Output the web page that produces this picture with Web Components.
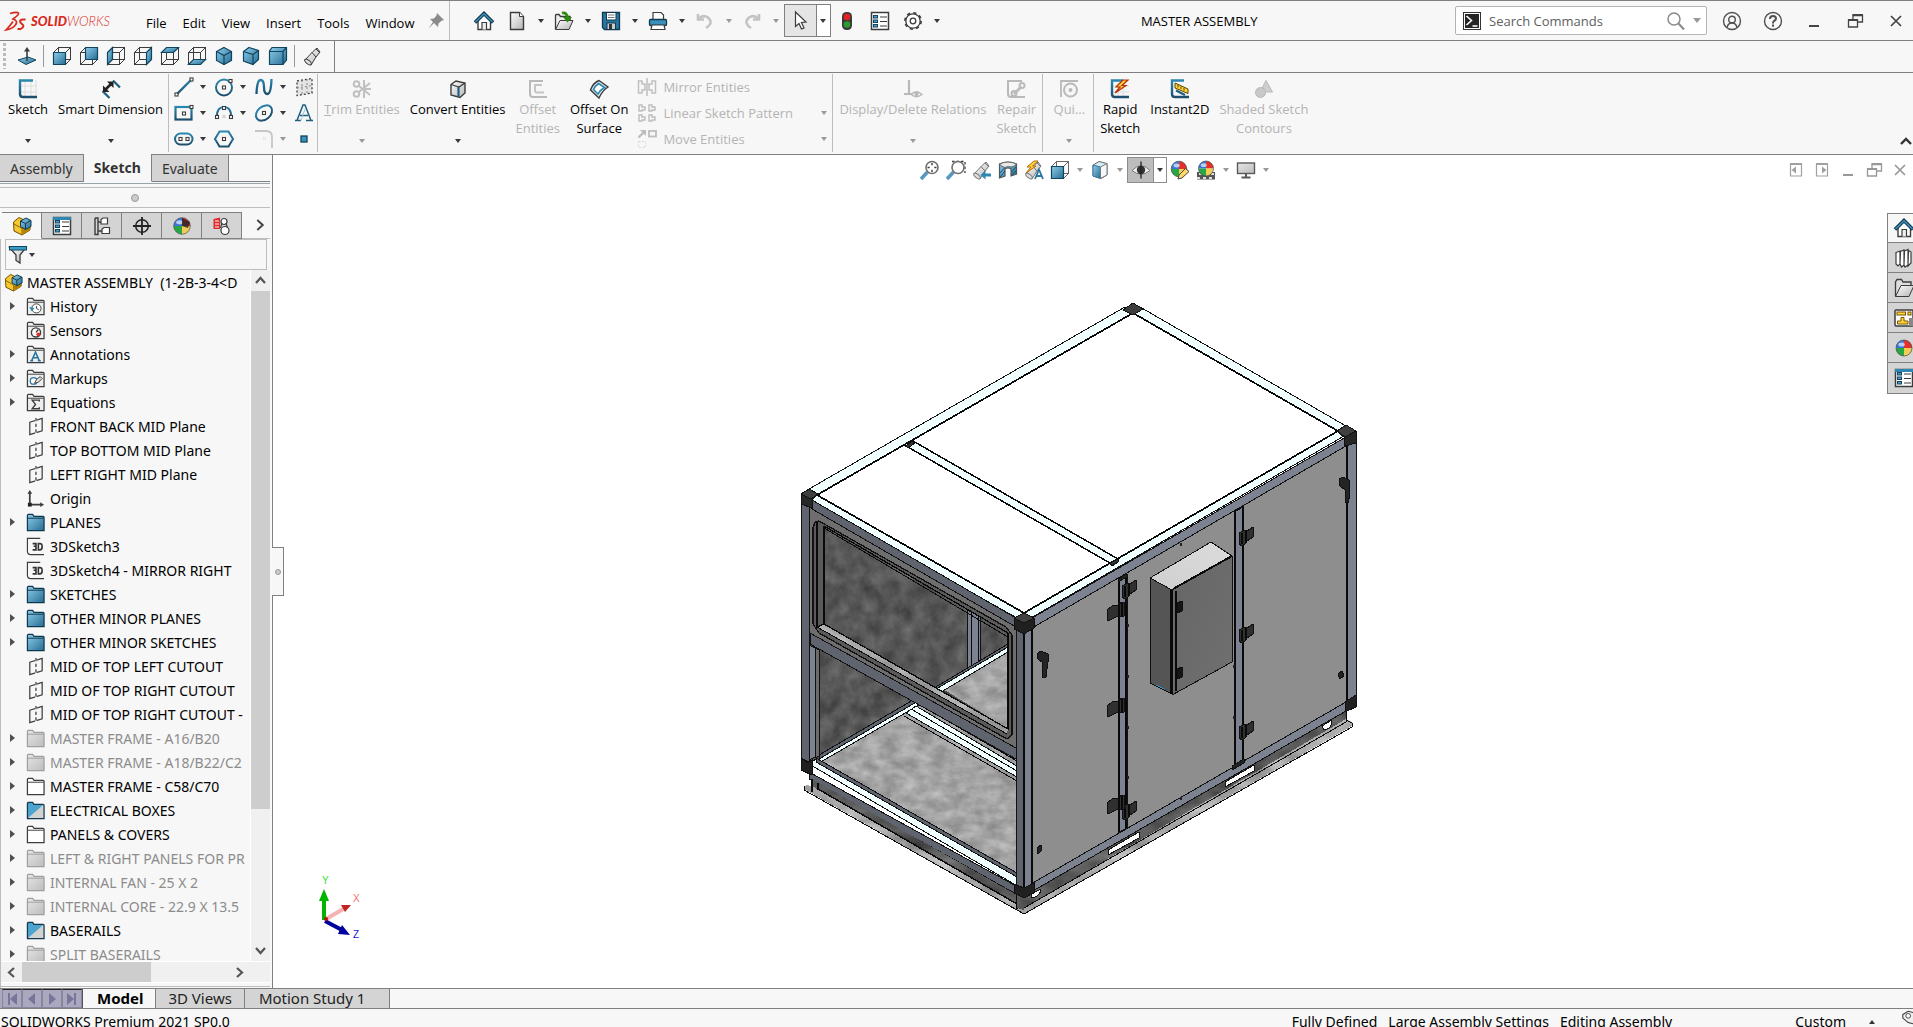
<!DOCTYPE html>
<html lang="en">
<head>
<meta charset="utf-8">
<title>MASTER ASSEMBLY</title>
<style>
html,body{margin:0;height:100%}
body{display:flex;flex-direction:column;height:100vh;overflow:hidden;background:#f7f7f7;color:#000;
font-family:"Noto Sans","Open Sans",sans-serif;font-size:14px;--line:#808080;--soft:#bdbdbd;--bar:#f7f7f7;--tab:#d4d4d4;--ui:"Open Sans","Noto Sans",sans-serif}
cad-workspace{flex:1;min-height:0}
</style>
</head>
<body>
<cad-titlebar heading="MASTER ASSEMBLY"></cad-titlebar>
<cad-viewbar></cad-viewbar>
<cad-ribbon></cad-ribbon>
<cad-workspace>
  <cad-feature-panel slot="side"></cad-feature-panel>
  <cad-viewport></cad-viewport>
</cad-workspace>
<cad-sheet-tabs></cad-sheet-tabs>
<cad-statusbar>
  <span>SOLIDWORKS Premium 2021 SP0.0</span>
  <span slot="state">Fully Defined</span>
  <span slot="state">Large Assembly Settings</span>
  <span slot="state">Editing Assembly</span>
</cad-statusbar>

<script>
const K='#3c3c3c', B='#1f5f80', G='#b9b9b9';
const DEFS=`<defs><linearGradient id="b" x2="1" y2="1"><stop stop-color="#8fcdec"/><stop offset="1" stop-color="#256d92"/></linearGradient>
<linearGradient id="g" x2="1" y2="1"><stop stop-color="#fff"/><stop offset="1" stop-color="#b5b5b5"/></linearGradient>
<linearGradient id="lg" x2="1" y2="1"><stop stop-color="#e6e6e6"/><stop offset="1" stop-color="#bcbcbc"/></linearGradient>
<linearGradient id="s" x2="0" y2="1"><stop stop-color="#2b86b0"/><stop offset="1" stop-color="#1d4f6c"/></linearGradient></defs>`;
const wire=(f,k=K)=>`<g fill="none" stroke="${k}" stroke-width="1"><rect x="1.5" y="6.5" width="12" height="12"/><rect x="6.5" y="1.5" width="12" height="12"/><path d="M1.500 6.500 6.500 1.500M13.500 6.500 18.500 1.500M1.500 18.500 6.500 13.500M13.500 18.500 18.500 13.500"/></g><path d="${f}" fill="url(#b)" stroke="#10455f" stroke-width="1.2"/>`;
const folder=(fill,st,inner='')=>`<path d="M1.500 18.500V2.500q0-1 1-1H7l1.500 2H18q1 0 1 1v14z" fill="${fill}" stroke="${st}" stroke-width="1.300"/><path d="M2 5.500H18.500" stroke="${st}" fill="none"/>${inner}`;
const node=(x,y,c=K)=>`<rect x="${x-1.5}" y="${y-1.500}" width="3" height="3" fill="#fff" stroke="${c}" stroke-width="1.100"/>`;
const ball=(x,y,r)=>`<path d="M${x} ${y}V${y-r}A${r} ${r} 0 0 0 ${x-r} ${y}z" fill="#3b76d8"/><path d="M${x} ${y}V${y-r}A${r} ${r} 0 0 1 ${x+r} ${y}z" fill="#e3302b"/><path d="M${x} ${y}H${x-r}A${r} ${r} 0 0 0 ${x} ${y+r}z" fill="#27a643"/><path d="M${x} ${y}H${x+r}A${r} ${r} 0 0 1 ${x} ${y+r}z" fill="#f0cd55"/><circle cx="${x}" cy="${y}" r="${r}" fill="none" stroke="#4a4a4a" stroke-width=".7"/><ellipse cx="${x-r*.3}" cy="${y-r*.45}" rx="${r*.4}" ry="${r*.25}" fill="#fff" opacity=".65"/>`;
const spy=(c=K)=>`<path d="M2 14 8 19 13 11 17 6 14 2 9.500 6z" fill="url(#g)" stroke="${c}"/><path d="M9 6.500 13 11M13 3 17 7" stroke="${c}" fill="none"/><ellipse cx="5" cy="16" rx="4" ry="1.900" transform="rotate(40 5 16)" fill="#ddd" stroke="${c}"/>`;
const list=`<rect x="1.500" y="1.500" width="17" height="17" fill="#fff" stroke="${K}" stroke-width="1.500"/><g fill="#4c9cc8" stroke="#10455f"><rect x="3.500" y="4.500" width="4" height="2.500"/><rect x="3.500" y="9" width="4" height="2.500"/><rect x="3.500" y="13.500" width="4" height="2.500"/></g><path d="M10 6h7M10 10.500h7M10 15h7" stroke="${K}" stroke-width="1.200"/>`;
const home=`<path d="M4 9v9.500H16.500V9" fill="#fff" stroke="${K}" stroke-width="1.400"/><path d="M8 18.500V11.500h4.500v7" fill="#eee" stroke="${K}" stroke-width="1.200"/><path d="M1 11.500 10 2.500 19 11.500" fill="none" stroke="#10384e" stroke-width="3.600"/><path d="M1.500 11 10 2.700 18.500 11" fill="none" stroke="#3d8fb8" stroke-width="1.500"/>`;
const part=`<path d="M1.500 6 7 1.500 12 4V8l6 1.500V14l-8 5-8-4z" fill="#f5c730" stroke="#6b4d00"/><path d="M2 8 10 12.500 18 9M10 12.500V19" fill="none" stroke="#8b6500"/><path d="M10 14 18 9.500V14l-8 5z" fill="#b88400"/><path d="M8.500 5 14 2l5 2.500v6l-5.500 3-5-3z" fill="url(#b)" stroke="#10384e"/><path d="M8.500 5 13.500 7.500 19 4.500M13.500 7.500V13" fill="none" stroke="#10384e"/>`;
const mag=`<path d="M1 19 7.500 12" stroke="#5599bf" stroke-width="3.600"/><circle cx="12" cy="7.500" r="6" fill="#fff" stroke="#707070" stroke-width="1.600"/>`;
const bolt=`<path d="M13 1 6 8h4L5 14 16 6.500h-4L18 1z" fill="#ffd23b" stroke="#b5300b" stroke-width="1.200"/>`;
const ICONS={
pin:`<path d="M11 2 18 9 15.500 9.800 12.500 12.500 12 16 8 12 2.500 17.500 7 11 4 8 8 7.500 10.500 4.500z" fill="#8a8a8a"/>`,
home,
file:`<path d="M3.500 1.500h9l4 4v13h-13z" fill="url(#g)" stroke="${K}" stroke-width="1.400"/><path d="M12.500 1.500v4h4" fill="#fff" stroke="${K}"/>`,
open:`<path d="M1.500 18.500V4.500q0-1 1-1H5l1.500 2H16v4" fill="#eee" stroke="${K}" stroke-width="1.300"/><path d="M1.500 18.500 6 9.500H19L15 18.500z" fill="url(#g)" stroke="${K}"/><path d="M8 2Q13 1 13.500 7" fill="none" stroke="#2c8b0c" stroke-width="2.800"/><path d="M9 6h9l-4.500 5.500z" fill="#2c8b0c"/>`,
save:`<path d="M1.500 1.500H18.500V18.500H3.500L1.500 16.500z" fill="#2676a0" stroke="#0f3a52" stroke-width="1.300"/><rect x="5.500" y="1.500" width="9.500" height="7.500" fill="#fff" stroke="#0f3a52"/><path d="M7 4h6.500M7 6.500h6.500" stroke="#777"/><rect x="6" y="12" width="8.500" height="6.500" fill="#ccc" stroke="#0f3a52"/><rect x="8" y="13" width="3" height="5" fill="#333"/>`,
print:`<path d="M5 9.500V1.500h8l2.500 2.500v5.500z" fill="#fff" stroke="${K}" stroke-width="1.200"/><rect x="1.500" y="8.500" width="17" height="6" rx="1" fill="#3a90bb" stroke="#0f3a52" stroke-width="1.300"/><path d="M4 14h12l1 4.500H3z" fill="#fff" stroke="${K}" stroke-width="1.200"/>`,
undo:`<path d="M3 3v5.500H9M3.500 8Q8 3 13 6.500Q19 12 11 17" fill="none" stroke="#c4c4c4" stroke-width="2.600"/>`,
redo:`<path d="M17 3v5.500H11M16.500 8Q12 3 7 6.500Q1 12 9 17" fill="none" stroke="#c4c4c4" stroke-width="2.600"/>`,
cursor:`<path d="M5.500 1V15.500L9 12.500 11.500 18 14 17 11.500 11.500 16 11z" fill="#fff" stroke="${K}" stroke-width="1.200"/>`,
lights:`<rect x="5" y="1" width="10" height="18" rx="4.500" fill="#3b3b3b"/><circle cx="10" cy="6" r="3.300" fill="#e32222"/><circle cx="10" cy="13.500" r="3.300" fill="#2f9a2f"/>`,
list,
gear:`<circle cx="10" cy="10" r="7.200" fill="#fff" stroke="${K}" stroke-width="1.300"/><circle cx="10" cy="10" r="8.200" fill="none" stroke="${K}" stroke-width="1.600" stroke-dasharray="3.200 3.240"/><circle cx="10" cy="10" r="2.800" fill="#fff" stroke="${K}" stroke-width="1.300"/>`,
term:`<rect x="1" y="1" width="18" height="18" fill="#333"/><rect x="2.500" y="2.500" width="15" height="15" fill="#262626" stroke="#fff"/><path d="M4.500 5 9.500 9.500 4.500 14" fill="none" stroke="#fff" stroke-width="1.600"/><path d="M10.500 15h5" stroke="#fff" stroke-width="1.600"/>`,
search:`<circle cx="8" cy="8" r="6" fill="none" stroke="#8a8a8a" stroke-width="1.500"/><path d="M12.500 12.500 18 18.500" stroke="#8a8a8a" stroke-width="2"/>`,
user:`<g fill="none" stroke="#505050" stroke-width="1.400"><circle cx="10" cy="10" r="8.500"/><circle cx="10" cy="8.500" r="3.300"/><path d="M5 16.500Q6 12 10 12T15 16.500"/></g>`,
help:`<circle cx="10" cy="10" r="8.500" fill="none" stroke="#505050" stroke-width="1.400"/><path d="M7 8Q7 5 10 5T13 7.500Q13 9 11 10Q10 10.700 10 12.500" fill="none" stroke="#505050" stroke-width="2"/><rect x="9" y="13.500" width="2" height="2.200" fill="#505050"/>`,
min:`<path d="M5 15h10" stroke="#454545" stroke-width="2"/>`,
restore:`<path d="M8 8V4.500h9.500V11H13" fill="none" stroke="#454545" stroke-width="1.300"/><path d="M7.500 4h10.500" stroke="#454545" stroke-width="2"/><path d="M3.500 9h9v7h-9z" fill="none" stroke="#454545" stroke-width="1.300"/><path d="M3 9h10" stroke="#454545" stroke-width="2"/>`,
close:`<path d="M5 5 15 15M15 5 5 15" stroke="#454545" stroke-width="1.700"/>`,
dleft:`<path d="M4.500 4h11v12h-11z" fill="none" stroke="#a0a0a0" stroke-width="1.200"/><path d="M4 4h12" stroke="#a0a0a0" stroke-width="2"/><path d="M10 6.500v7L5.500 10z" fill="#a0a0a0"/>`,
dright:`<path d="M4.500 4h11v12h-11z" fill="none" stroke="#a0a0a0" stroke-width="1.200"/><path d="M4 4h12" stroke="#a0a0a0" stroke-width="2"/><path d="M10 6.500v7L14.500 10z" fill="#a0a0a0"/>`,
normal:`<path d="M1 14 11 11 19 14 9 18.500z" fill="url(#b)" stroke="#10455f"/><path d="M10 15V3" stroke="${K}" stroke-width="1.600"/><path d="M7 5.500 10 1 13 5.500z" fill="${K}"/>`,
front:wire('M1.500 6.500H13.500V18.500H1.500z'),back:wire('M6.500 1.500H18.500V13.500H6.500z'),left:wire('M1.500 6.500 6.500 1.500V13.500L1.500 18.500z'),right:wire('M13.500 6.500 18.500 1.500V13.500L13.500 18.500z'),top:wire('M1.500 6.500 6.500 1.500H18.500L13.500 6.500z'),bottom:wire('M1.500 18.500 6.500 13.500H18.500L13.500 18.500z'),
iso:`<path d="M10 1.500 17.500 5.500V14.500L10 18.500 2.500 14.500V5.500z" fill="url(#b)" stroke="#10455f" stroke-width="1.200"/><path d="M2.500 5.500 10 9.500 17.500 5.500M10 9.500V18.500" fill="none" stroke="#10455f" stroke-width="1.200"/>`,
tri:`<path d="M8 1.500 17.500 4.500V13.500L12 18.500 2.500 15V5.500z" fill="url(#b)" stroke="#10455f" stroke-width="1.200"/><path d="M2.500 5.500 12 8.500 17.500 4.500M12 8.500V18.500" fill="none" stroke="#10455f" stroke-width="1.200"/>`,
di:`<path d="M4 1.500H18.500V14L15 18.500H1.500V5z" fill="url(#b)" stroke="#10455f" stroke-width="1.200"/><path d="M1.500 5.500H15L18.500 1.500M15 5.500V18.500" fill="none" stroke="#10455f" stroke-width="1.200"/>`,
spy:spy(),
sketch:`<path d="M7 1V19M13 1V19M1 7H19M1 13H19M18 1V19" stroke="#dedede"/><path d="M15 1.500H2V15Q2 18 5 18H19" fill="none" stroke="url(#s)" stroke-width="2.400"/>`,
dim:`<path d="M12 1.500 19 8.500M1.500 12 8.500 19" stroke="${B}" stroke-width="2.200"/><path d="M3.500 11.500 11 4" stroke="#222" stroke-width="2.600"/><path d="M2 13V6.500L8.500 13zM12.500 2.500V9L6 2.500z" fill="#222"/>`,
line:`<path d="M2 18 18 2" stroke="url(#s)" stroke-width="2.400"/>${node(2.5,17.5)}${node(17.5,2.5)}`,
circle:`<circle cx="10" cy="10.500" r="8" fill="none" stroke="url(#s)" stroke-width="2"/>${node(10,10.5)}${node(16.5,4)}`,
spline:`<path d="M2.500 17Q3 3 6.500 3T10 10T13.500 17T17.500 2" fill="none" stroke="url(#s)" stroke-width="2.300"/>`,
plane:`<path d="M3 4 18 1.500V16L3 18.500z" fill="#e4e4e4" stroke="${K}" stroke-width="1.300" stroke-dasharray="2 2"/><path d="M8 3v15M13 2v15M3 11 18 8.500" stroke="#888" stroke-dasharray="2 2"/>`,
rect:`<rect x="1.500" y="4" width="16" height="12.500" fill="none" stroke="url(#s)" stroke-width="2.200"/>${node(10,10.5)}${node(17.5,4)}`,
arc:`<path d="M3 13Q3 4 10 4T17 13" fill="none" stroke="url(#s)" stroke-width="2"/>${node(3,14)}${node(10,5)}${node(17,14)}<path d="m8.500 12 3 3m0-3-3 3" stroke="#bbb"/>`,
ellipse:`<ellipse cx="10" cy="10" rx="9" ry="6.500" transform="rotate(-40 10 10)" fill="none" stroke="url(#s)" stroke-width="2"/>${node(10,10)}`,
text:`<path d="M3 17.500 9 2h2l6 15.500M6 12.500h8M1 17.500h6M12 17.500h7" fill="none" stroke="${B}" stroke-width="1.500"/><path d="M7 17.500 11 6" stroke="#9cc7dd"/>`,
slot:`<rect x="1" y="4.500" width="17.500" height="11" rx="5.500" fill="none" stroke="url(#s)" stroke-width="2"/>${node(6.5,10)}${node(13.5,10)}`,
poly:`<path d="M5.500 2.500h9L19 10l-4.500 7.500h-9L1 10z" fill="none" stroke="url(#s)" stroke-width="2"/>${node(10,10)}`,
fillet:`<path d="M1 2H12Q18 2 18 8V19" fill="none" stroke="#c6c6c6" stroke-width="1.800"/><path d="m9 8 3 3m0-3-3 3" stroke="#ddd"/>`,
point:`<rect x="7" y="7" width="6" height="6" fill="#3c93bf" stroke="#10455f" stroke-width="1.300"/>`,
trim:`<g fill="none" stroke="#c0c0c0" stroke-width="2"><circle cx="4.500" cy="5" r="2.800"/><circle cx="4.500" cy="15" r="2.800"/><path d="M7 7 18 16M7 13 18 4M12 1V19M9 10H19"/></g>`,
convert:`<path d="M3 5.500 8 2l9 2v10l-5 4.500-9-2.500z" fill="url(#g)" stroke="${K}" stroke-width="1.400"/><path d="M3 5.500 11 8 17 4" fill="none" stroke="${K}" stroke-width="1.300"/><path d="M10.500 8V18" stroke="${B}" stroke-width="2.200"/>`,
offset:`<path d="M15 2H2V15Q2 18 5 18H19" fill="none" stroke="${G}" stroke-width="2"/><path d="M14 6H7V11.500Q7 13.500 9 13.500H16" fill="none" stroke="#c5c5c5" stroke-width="2"/>`,
offsurf:`<path d="M10 1.500 19 8Q13 12 10 19L1.500 11Q4 4 10 1.500z" fill="#d8e6ee" stroke="${K}" stroke-width="1.400"/><path d="M9.500 4.500 15.500 8.500Q11 11 9 15L4.500 10.500Q6 7 9.500 4.500z" fill="#fff" stroke="#2f86b0" stroke-width="1.600"/>`,
mirror:`<g fill="none" stroke="#c0c0c0" stroke-width="1.500"><path d="M1.500 4H5V7H8V13H5V16H1.500zM18.500 4H15V7H12V13H15V16H18.500zM10 1V19"/></g>`,
pattern:`<g fill="none" stroke="#bdbdbd" stroke-width="1.400"><path d="M2 2h3v2h3v3H5v1H2zM12 2h3v2h3v3h-3v1h-3zM2 12h3v2h3v3H5v1H2zM12 12h3v2h3v3h-3v1h-3z"/></g>`,
move:`<path d="M1.500 8.500 7 3" stroke="#bdbdbd" stroke-width="2.400"/><path d="M3 1H9V7z" fill="#bdbdbd"/><rect x="12" y="2" width="7" height="5.500" fill="none" stroke="#bdbdbd" stroke-width="1.800"/><rect x="1.500" y="12.500" width="7" height="6" fill="none" stroke="#d8d8d8" stroke-dasharray="2 1.500"/>`,
relations:`<path d="M6 1V15M1 15H10" stroke="${G}" stroke-width="2.200"/><path d="M8 15.500Q13.500 10 19 15.500Q13.500 20 8 15.500z" fill="none" stroke="${G}" stroke-width="1.300"/><circle cx="13.500" cy="15" r="2.200" fill="${G}"/>`,
repair:`<path d="M16 2H2V15Q2 18 5 18H19" fill="none" stroke="${G}" stroke-width="2"/><path d="M8 15 15.500 7.500" stroke="#bbb" stroke-width="3"/><circle cx="16" cy="6.500" r="2.500" fill="none" stroke="#bbb" stroke-width="2"/><circle cx="8" cy="14.500" r="2.500" fill="none" stroke="#bbb" stroke-width="2"/>`,
quick:`<path d="M2 18V2H19" fill="none" stroke="${G}" stroke-width="1.800"/><circle cx="11.500" cy="11" r="6.500" fill="none" stroke="${G}" stroke-width="2"/><circle cx="11.500" cy="11" r="2" fill="${G}"/>`,
rapid:`<path d="M8 1V19M13 1V19M1 7H19M1 13H19" stroke="#ddd"/><path d="M13 1.500H2V15Q2 18 5 18H19" fill="none" stroke="url(#s)" stroke-width="2.400"/>${bolt}`,
instant:`<path d="M14 1.500H2V15Q2 18 5 18H19" fill="none" stroke="url(#s)" stroke-width="2.400"/><path d="M5 4 18 10V14.500L5 9z" fill="#ffd23b" stroke="#5a4600"/><path d="M8 6v2.500M11 7.500V10M14 9v2.500" stroke="#5a4600"/><path d="M6 11.500 15 16" stroke="${B}" stroke-width="2"/>`,
shaded:`<path d="M12 1.500 18.500 13H6z" fill="#cfcfcf" stroke="${G}"/><circle cx="6.500" cy="13.500" r="5" fill="#c8c8c8" stroke="${G}"/>`,
fit:`${mag}<path d="M12 3v9M7.500 7.500h9" stroke="${K}" stroke-width="1.400" stroke-dasharray="2.200 4.600"/>`,
zarea:`<path d="M6 1.500H19V13" fill="none" stroke="${K}" stroke-width="1.300" stroke-dasharray="2.500 2"/>${mag}`,
prev:`${spy('#777')}<path d="M19 15h-7" stroke="#2f86b0" stroke-width="3"/><path d="M13.500 10.500V19.500L8.500 15z" fill="#2f86b0"/>`,
section:`<path d="M1.500 4Q10 0 18.500 4V14L13 16V9Q10 7 7 9V16L1.500 18z" fill="url(#b)" stroke="#555" stroke-width="1.200"/><path d="M1.500 4Q4 7 7 7.500Q10 6 13 7Q16 7 18.500 4Q10 0 1.500 4z" fill="#e8e8e8" stroke="#666"/><path d="M2 13 6.500 8M2 17 7 11M13.500 12 18 7M13.500 15 18 11" stroke="#174f6d"/>`,
annview:`${spy('#777')}<path d="M10 1 3 7h4L2 13 12 6H8.500L14 1z" fill="#ffd23b" stroke="#b5700b"/><path d="M11 19 15 9.500 19 19M12.500 16h5" stroke="#2676a0" stroke-width="1.800" fill="none"/>`,
orient:wire('M1.500 6.500H13.500V18.500H1.500z','#666'),
style:`<path d="M3 5 9 1.500 17 3.500V15L11 18.500 3 16z" fill="#d5edf8" stroke="#666"/><path d="M3 5 10.500 7V18.500L3 16z" fill="url(#b)" stroke="#3a7796"/><path d="M10.500 7 17 3.500V15L10.500 18.500z" fill="#f2f8fb" stroke="#777"/>`,
eye:`<path d="M1 10.500Q10 1 19 10.500Q10 18 1 10.500z" fill="#eee" stroke="#777"/><circle cx="10" cy="10" r="4.200" fill="#333"/><path d="M10 1.500V18.500" stroke="#222" stroke-width="1.300"/>`,
appear:`${ball(9,9,7.8)}<path d="M8 19 9 15 15.500 8.500 19 11.500 12 18z" fill="#ffd86b" stroke="#444"/>`,
scene:`<rect x="1" y="12" width="18" height="7.500" fill="#555"/><path d="M3 14h3m3 0h3m3 0h3M1 18h3m3 0h3m3 0h3" stroke="#ddd" stroke-width="2"/>${ball(10,8.5,7.5)}`,
monitor:`<rect x="1.500" y="3" width="17" height="10.500" fill="url(#lg)" stroke="#5a5a5a" stroke-width="1.400"/><path d="M10 13.500V17M5.500 17.500h9" stroke="#5a5a5a" stroke-width="2"/>`,
part,
props:`${list}<rect x="1" y="1" width="18" height="3" fill="#2f86b0"/>`,
config:`<path d="M3 2H6V6M3 2V18.500H6V6M6 6H10M6 15H10" fill="none" stroke="${K}" stroke-width="1.400"/><path d="M9 3.500 11 2h4.500v6h-6.500zM10 13l2-1.500h5.500v6H10z" fill="#fff" stroke="${K}" stroke-width="1.200"/>`,
target:`<circle cx="10" cy="10" r="6.300" fill="none" stroke="#222" stroke-width="1.500"/><path d="M10 1V19M1 10H19" stroke="#222" stroke-width="1.800"/>`,
ball:`${ball(10,10,8.3)}<path d="M10 2 18 6 16 12 10 10z" fill="#282828" opacity=".85"/>`,
cam:`<path d="M1.500 3 8 1.500V13L1.500 13z" fill="#df2b2b"/><path d="M3 5h4M3 8h4M3 11h4" stroke="#fff"/><g fill="#fff" stroke="${K}" stroke-width="1.200"><circle cx="12" cy="5.500" r="3"/><circle cx="13" cy="14.500" r="4"/><path d="M10 7 8.500 12M14 7l1.500 5"/></g>`,
chev:`<path d="M7 4.500 13 10 7 15.500" fill="none" stroke="#444" stroke-width="2.200"/>`,
filter:`<path d="M1.500 2.500H18L12 10V18L8 15.500V10z" fill="url(#g)" stroke="${K}" stroke-width="1.300"/><rect x="1.500" y="1.500" width="17" height="3.500" fill="#3d9bc7" stroke="#10455f"/>`,
fHistory:folder('#eee',K,`<circle cx="11" cy="12" r="4.800" fill="#fff" stroke="${K}"/><path d="M11 9.500V12l2.500 1.500" fill="none" stroke="${K}"/><path d="M3.500 10.500 6 15 9 11.500z" fill="#2f86b0"/>`),
fSensors:folder('#eee',K,`<circle cx="10.500" cy="12" r="4.800" fill="#fff" stroke="${K}" stroke-width="1.500"/><path d="M10.500 12 13 9" stroke="${K}" stroke-width="1.500"/><circle cx="13" cy="14" r="2" fill="#df2b2b"/>`),
fAnn:folder('#eee',K,`<path d="M6 16.500 10 7.500l4 9M7.500 13.500h5M4.500 16.500h3M12.500 16.500h3" fill="none" stroke="#2676a0" stroke-width="1.600"/>`),
fMark:folder('#eee',K,`<circle cx="8" cy="12.500" r="3.500" fill="#fff" stroke="#2676a0" stroke-width="1.300"/><path d="M9 15 11 11 15 8 17 10 13 14z" fill="#ddd" stroke="${K}"/>`),
fEq:folder('#eee',K,`<path d="M14 9V7.500H6.500L10 12 6.500 16.500H14V15" fill="none" stroke="${K}" stroke-width="1.500"/>`),
tplane:`<path d="M4 5.500 17 1.500V14.500L4 18.500z" fill="none" stroke="${K}" stroke-width="1.300"/><path d="M10.500 0V20" stroke="#f7f7f7" stroke-width="2"/><path d="M10.500 1V19" stroke="${K}" stroke-width="1.300" stroke-dasharray="3.500 2.500"/>`,
origin:`<path d="M4 4V16.500H16" fill="none" stroke="${K}" stroke-width="1.800"/><path d="M1.500 5 4 1 6.500 5zM15 14 19 16.500 15 19z" fill="${K}"/><rect x="2" y="14.500" width="4" height="4" fill="#222"/>`,
sk3d:`<path d="M15 1.500H1.500V15Q1.500 18.500 5 18.500H19" fill="none" stroke="${K}" stroke-width="1.200"/><path d="M7 7H10.500V9.800H8M10.500 10V13.500H7M13 7V13.500H14.500Q17 13.500 17 10.200T14.500 7z" fill="none" stroke="#333" stroke-width="1.700"/>`,
fBlue:folder('url(#b)','#10384e'),fGray:folder('url(#lg)','#a0a0a0'),fWhite:folder('#fff',K),
fHalf:`<path d="M1.500 18.500V2.500q0-1 1-1H7l1.500 2H18q1 0 1 1v14z" fill="#d2d2d2"/><path d="M1.500 18.500V1.500H7l1.500 2H19z" fill="#4ea3cf"/><path d="M1.500 18.500V2.500q0-1 1-1H7l1.500 2H18q1 0 1 1v14z" fill="none" stroke="#10384e" stroke-width="1.300"/>`,
books:`<path d="M2 4.500 6 3V16L4 18 2 16zM6.500 3.500 10 2V17L7.500 19 6 16zM10.500 3 14 1.500V17L11 19 10 17zM14.500 2.500 17 4V15L14 18z" fill="#fff" stroke="${K}" stroke-width="1.200"/>`,
lib:`<path d="M1.500 18.500V4L3 1.500H7.500L9 4H17V8" fill="#ddd" stroke="${K}" stroke-width="1.300"/><path d="M1.500 18.500 7 7.500H20L15 18.500z" fill="url(#g)" stroke="${K}"/>`,
palette:`<rect x="1" y="2" width="18" height="16" rx="1" fill="#fff" stroke="${K}" stroke-width="1.500"/><g fill="#ffd23b" stroke="#7b5600"><rect x="3" y="4" width="8.500" height="3"/><rect x="14" y="4" width="3" height="3"/><path d="M7 9.500h3V13H14v3H3.500v-3H7z"/></g><rect x="15" y="10" width="5" height="8" fill="#888"/>`,
orb:ball(10,10,8),
chevup:`<path d="M5 13 10 8 15 13" fill="none" stroke="#333" stroke-width="2.400"/>`,
tags:`<path d="M2 5 8 1.500 14 3V9L20 12V17L8 14 2 9z" fill="#eee" stroke="${K}" stroke-width="1.200"/><circle cx="8" cy="6.500" r="2.600" fill="#fff" stroke="${K}"/>`,
ds:`<path d="M5 2.500Q12 .5 13.500 2Q14.500 3.500 8 8Q14 10 10 14.500Q7 18 1 19Q5 15 8 10.500" fill="none" stroke="#da291c" stroke-width="1.700"/><path d="M20.500 8.500Q15 8 15 10.200Q15 11.500 17.500 13.500T15.500 18H12.500" fill="none" stroke="#da291c" stroke-width="2"/>`
};
const icon=(n,s=20,cls='')=>`<cad-icon name="${n}" style="--s:${s}px" class="${cls}"></cad-icon>`;
const arrow=(off)=>`<i class="arr${off?' off':''}"></i>`;
const BASE=`:host,*{box-sizing:border-box}button{font:inherit;color:inherit;background:none;border:0;padding:0;margin:0;display:flex;align-items:center;justify-content:center}
.arr{width:0;height:0;border:3px solid transparent;border-top:4px solid #3a3a3a;border-bottom:0;flex:none}.arr.off{border-top-color:#999}`;
class Base extends HTMLElement{
  connectedCallback(){ if(this.shadowRoot) return; const t=document.createElement('template'); t.innerHTML=`<style>${BASE}${this.css()}</style>${this.html()}`; this.attachShadow({mode:'open'}).append(t.content.cloneNode(true)); }
  css(){return ''} html(){return ''}
}
customElements.define('cad-icon',class extends Base{
  css(){return `:host{display:block;flex:none;width:var(--s);height:var(--s)}svg{display:block;width:100%;height:100%;overflow:visible}`}
  html(){return `<svg viewBox="0 0 20 20" aria-hidden="true">${DEFS}${ICONS[this.getAttribute('name')]||''}</svg>`}
});

customElements.define('cad-titlebar',class extends Base{
  css(){return `:host{display:flex;align-items:center;height:41px;flex:none;overflow:hidden;border-top:1px solid var(--line);border-bottom:1px solid var(--line);background:var(--bar);font:13px var(--ui)}
  .brand{display:flex;align-items:center;gap:6px;padding-left:5px;width:146px;color:#da291c;font:italic 900 13px Lato,sans-serif}
  .brand span{font-weight:300}
  nav{display:flex;gap:16px;padding-top:4px}nav a{color:#000;text-decoration:none}
  .pin{margin:0 3px 0 11px}
  .quick{display:flex;align-items:center;border-left:1px solid var(--soft);align-self:stretch;padding-left:18px}
  .quick>button{width:33px}.quick>button.m{width:14px}
  .sel{display:flex;border:1px solid var(--line);height:33px;margin-left:1px;background:#fff}.sel .p{width:32px;background:#e5e5e5;border-right:1px solid var(--line)}.sel .m{width:13px}
  h1{flex:1;text-align:center;font-size:13px;font-weight:400;margin:0}
  .search{display:flex;align-items:center;width:252px;height:29px;border:1px solid #b4b4b4;border-radius:2px;background:#fff;padding:0 5px 0 6px;gap:7px}
  input{flex:1;min-width:0;border:0;padding:0;font:inherit;outline:0;background:none}input::placeholder{color:#606060;opacity:1}
  .search .arr{border-width:5px 4px 0}
  .win{display:flex;margin-right:-3px;padding:0 0 0 4px}.win button{width:41px;height:30px}`}
  html(){
    const q=(n,a,off)=>`<button aria-label="${n}">${icon(n)}</button>${a?`<button class="m" aria-label="${n} options">${arrow(off)}</button>`:''}`;
    return `<div class="brand">${icon('ds')}<div>SOLID<span>WORKS</span></div></div>
    <nav>${['File','Edit','View','Insert','Tools','Window'].map(x=>`<a href="#">${x}</a>`).join('')}</nav>
    ${icon('pin',20,'pin')}
    <div class="quick">${q('home')}${q('file',1)}${q('open',1)}${q('save',1)}${q('print',1)}${q('undo',1,1)}${q('redo',1,1)}
    <div class="sel"><button class="p" aria-label="Select">${icon('cursor')}</button><button class="m" aria-label="Select options">${arrow()}</button></div>
    ${q('lights')}${q('list')}${q('gear',1)}</div>
    <h1>${this.getAttribute('heading')}</h1>
    <label class="search">${icon('term')}<input aria-label="Search Commands" placeholder="Search Commands">${icon('search')}${arrow(1)}</label>
    <div class="win">${['user','help','min','restore','close'].map(n=>`<button aria-label="${n}">${icon(n)}</button>`).join('')}</div>`}
});

customElements.define('cad-viewbar',class extends Base{
  css(){return `:host{display:flex;flex:none;height:32px;border-bottom:1px solid var(--line);background:var(--bar)}
  .bar{display:flex;align-items:center;width:335px;border-right:1px solid var(--line);padding:0 0 1px 3px}
  .grip{width:3px;height:26px;background:repeating-linear-gradient(#bbb 0 3px,transparent 3px 5px);margin-right:7px}
  button{width:27px;height:30px}hr{width:1px;height:22px;border:0;margin:0 4px 0 3px;background:#999}`}
  html(){const b=n=>`<button aria-label="${n}">${icon(n)}</button>`;
  return `<div class="bar"><div class="grip"></div>${b('normal')}<hr>${['front','back','left','right','top','bottom','iso','tri','di'].map(b).join('')}<hr>${b('spy')}</div>`}
});

customElements.define('cad-tool',class extends Base{
  css(){return `:host{display:block;padding:0 5px}:host([disabled]){color:#b4b4b4}
  button{flex-direction:column;justify-content:flex-start;height:100%;white-space:nowrap}
  .t{line-height:19px;margin-top:1px;text-align:center;flex:1}.arr{margin-bottom:9px}`}
  html(){const off=this.hasAttribute('disabled');return `<button ${off?'disabled':''}>${icon(this.getAttribute('icon'))}<span class="t"><slot></slot></span>${this.hasAttribute('menu')?arrow(off):''}</button>`}
});

customElements.define('cad-ribbon',class extends Base{
  css(){return `:host{display:flex;flex:none;height:82px;border-bottom:1px solid var(--line);background:var(--bar);font:13px var(--ui);padding-left:3px}
  .grp{display:flex;padding:5px 0 0 1px;margin:1px 0 2px;border-right:1px solid var(--soft)}.grp:first-of-type{padding-left:0}.grp.q{padding:5px 3px 0 6px}.grp:last-of-type{border:0}
  .grid{display:grid;grid-template-columns:repeat(4,40px);grid-template-rows:repeat(3,26px);width:149px;padding:0 0 0 5px;margin:1px 0 2px;border-right:1px solid var(--soft)}
  .grid button{gap:6px;justify-content:flex-start}
  .stack{display:grid;grid-template-rows:repeat(3,26px);width:199px;margin-top:-5px;padding-left:4px}
  .stack button{justify-content:flex-start;gap:6px;color:#b4b4b4}.stack span{flex:1;text-align:left}.stack .arr{margin-right:5px}
  .up{margin:58px -3px 0 auto;height:20px}`}
  html(){
    const t=(n,l,f='')=>`<cad-tool icon="${n}" ${f}>${l}</cad-tool>`;
    const g=(n,a,off)=>`<button aria-label="${n}">${icon(n)}${a?arrow(off):''}</button>`;
    const s=(n,l,a)=>`<button disabled>${icon(n)}<span>${l}</span>${a?arrow(1):''}</button>`;
    return `<div class="grp">${t('sketch','Sketch','menu')}${t('dim','Smart Dimension','menu')}</div>
    <div class="grid">${g('line',1)}${g('circle',1)}${g('spline',1)}${g('plane')}${g('rect',1)}${g('arc',1)}${g('ellipse',1)}${g('text')}${g('slot',1)}${g('poly')}${g('fillet',1,1)}${g('point')}</div>
    <div class="grp">${t('trim','<u>T</u>rim Entities','menu disabled')}${t('convert','Convert Entities','menu')}${t('offset','Offset<br>Entities','disabled')}${t('offsurf','Offset On<br>Surface')}
    <div class="stack">${s('mirror','Mirror Entities')}${s('pattern','Linear Sketch Pattern',1)}${s('move','Move Entities',1)}</div></div>
    <div class="grp">${t('relations','Display/Delete Relations','menu disabled')}${t('repair','Repair<br>Sketch','disabled')}</div>
    <div class="grp q">${t('quick','Qui...','menu disabled')}</div>
    <div class="grp">${t('rapid','Rapid<br>Sketch')}${t('instant','Instant2D')}${t('shaded','Shaded Sketch<br>Contours','disabled')}</div>
    <button class="up" aria-label="Collapse">${icon('chevup')}</button>`}
});

customElements.define('cad-workspace',class extends Base{
  css(){return `:host{display:grid;grid-template-columns:273px minmax(0,1fr);grid-template-rows:minmax(0,1fr)}::slotted(*){min-width:0;min-height:0}`}
  html(){return `<slot name="side"></slot><slot></slot>`}
});

customElements.define('cad-tree-item',class extends Base{
  css(){return `:host{display:flex;align-items:center;height:24px;white-space:nowrap;padding-left:9px;gap:5px}
  :host([root]){padding-left:3px;gap:4px}:host([off]){color:#8c8c8c}
  i{width:0;height:0;border:4px solid transparent;border-left:5px solid #505050;border-right:0;margin-right:6px}i.no{visibility:hidden}:host([root]) i{display:none}`}
  html(){return `<i class="${this.hasAttribute('open')?'':'no'}"></i>${icon(this.getAttribute('icon'),19)}<span><slot></slot></span>`}
});

const TREE=[['part','MASTER ASSEMBLY&nbsp; (1-2B-3-4&lt;D','root'],['fHistory','History','open'],['fSensors','Sensors'],['fAnn','Annotations','open'],['fMark','Markups','open'],['fEq','Equations','open'],
['tplane','FRONT BACK MID Plane'],['tplane','TOP BOTTOM MID Plane'],['tplane','LEFT RIGHT MID Plane'],['origin','Origin'],['fBlue','PLANES','open'],['sk3d','3DSketch3'],['sk3d','3DSketch4 - MIRROR RIGHT'],
['fBlue','SKETCHES','open'],['fBlue','OTHER MINOR PLANES','open'],['fBlue','OTHER MINOR SKETCHES','open'],['tplane','MID OF TOP LEFT CUTOUT'],['tplane','MID OF TOP RIGHT CUTOUT'],['tplane','MID OF TOP RIGHT CUTOUT -'],
['fGray','MASTER FRAME - A16/B20','open off'],['fGray','MASTER FRAME - A18/B22/C2','open off'],['fWhite','MASTER FRAME - C58/C70','open'],['fHalf','ELECTRICAL BOXES','open'],['fWhite','PANELS &amp; COVERS','open'],
['fGray','LEFT &amp; RIGHT PANELS FOR PR','open off'],['fGray','INTERNAL FAN - 25 X 2','open off'],['fGray','INTERNAL CORE - 22.9 X 13.5','open off'],['fHalf','BASERAILS','open'],['fGray','SPLIT BASERAILS','open off']];
customElements.define('cad-feature-panel',class extends Base{
  css(){return `:host{display:flex;flex-direction:column;border-right:1px solid var(--line);background:var(--bar);padding-right:2px;min-height:0}
  .cm{display:flex;height:29px;flex:none;border-bottom:1px solid #9aa3a8;padding-bottom:1px}
  .cm button{background:var(--tab);color:#333;border-right:1px solid var(--line);border-bottom:1px solid var(--line);padding:0 10px}
  .cm button.on{background:var(--bar);font-weight:700;border-bottom-color:transparent;margin-top:-1px;position:relative}
  .cm::after{content:"";flex:1;border-bottom:1px solid var(--line)}
  .split{height:21px;flex:none;margin-top:3px;border:1px solid var(--soft);border-width:1px 0;display:flex;align-items:center;justify-content:center}
  .split::after,.dot{content:"";width:6px;height:6px;border-radius:50%;background:#ccc;border:1px solid #999}
  .fm{display:flex;height:27px;flex:none;margin-top:4px;padding-left:2px}
  .fm button{width:40px;background:var(--tab);border:1px solid var(--line);border-left:0}
  .fm button.on{background:var(--bar);border-bottom-color:transparent}
  .fm .more{flex:1;width:auto;background:none;border:0;border-bottom:1px solid var(--soft);padding-left:8px}
  .body{display:flex;flex-direction:column;flex:1;min-height:0;border-left:1px solid var(--soft)}
  .filter{display:flex;align-items:center;height:31px;flex:none;margin:0 3px 0 4px;border:1px solid var(--soft);padding-left:2px;gap:1px}
  .filter input{flex:1;min-width:0;border:0;background:none;outline:0;font:inherit}
  .scroll{display:grid;grid-template-columns:minmax(0,1fr) 19px;flex:1;min-height:0;border-bottom:1px solid #fff}
  .tree{overflow:hidden;border-right:1px solid #fff}
  .v{display:flex;flex-direction:column;background:#f0f0f0}.v b{flex:520;background:#cdcdcd}.v s{flex:131}
  .v .e{height:21px;flex:none}
  .h{display:flex;height:20px;flex:none;background:#f0f0f0}.h .e{width:21px}.h b{width:129px;background:#cdcdcd}.h s{flex:1}.h .pad{width:20px}
  .foot{height:5px;flex:none;margin-bottom:1px;border-bottom:1px solid var(--soft);border-top:1px solid #fff}`}
  html(){
    const ch=d=>`<svg width="11" height="11" viewBox="0 0 11 11"><path d="${d}" fill="none" stroke="#555" stroke-width="2.200"/></svg>`;
    return `<div class="cm"><button>Assembly</button><button class="on">Sketch</button><button>Evaluate</button></div>
    <div class="split"></div>
    <div class="fm">${['part','props','config','target','ball','cam'].map((n,i)=>`<button class="${i?'':'on'}" aria-label="${n}">${icon(n)}</button>`).join('')}<button class="more" aria-label="More">${icon('chev',18)}</button></div>
    <div class="body"><label class="filter">${icon('filter')}${arrow()}<input aria-label="Filter"></label>
    <div class="scroll"><div class="tree">${TREE.map(([i,l,f=''])=>`<cad-tree-item icon="${i}" ${f}>${l}</cad-tree-item>`).join('')}</div>
    <div class="v"><button class="e" aria-label="Scroll up">${ch('M1 8 5.500 3 10 8')}</button><b></b><s></s><button class="e" aria-label="Scroll down">${ch('M1 3 5.500 8 10 3')}</button></div></div>
    <div class="h"><button class="e" aria-label="Scroll left">${ch('M8 1 3 5.500 8 10')}</button><b></b><s></s><button class="e" aria-label="Scroll right">${ch('M3 1 8 5.500 3 10')}</button><span class="pad"></span></div>
    <div class="foot"></div></div>`}
});

customElements.define('cad-model',class extends Base{
  css(){return `:host{display:block}svg{display:block;width:100%;height:100%}text{font-family:"Liberation Sans",sans-serif}`}
  html(){
    const P=(p,f,s='#111',w=1)=>`<path d="M${p}z" fill="${f}" stroke="${s}" stroke-width="${w}" stroke-linejoin="round"/>`;
    const L=(p,w=1.5,s='#0a0a0a')=>`<path d="M${p}" fill="none" stroke="${s}" stroke-width="${w}"/>`;
    const hr=(x,y)=>P(`${x-7} ${y-4}L${x-1} ${y-7} ${x+1} ${y-6} ${x+7} ${y-10}V${y}L${x+1} ${y+4} ${x-1} ${y+7} ${x-4} ${y+9} ${x-7} ${y+7}`,'#303030')+L(`${x-4} ${y-4}V${y+7}M${x} ${y-6}V${y+5}`,1.300);
    const hl=(x,y)=>P(`${x-9} ${y-2}L${x-4} ${y-6} ${x+3} ${y-7} ${x+5} ${y-10} ${x+8} ${y-10}V${y+4}L${x+2} ${y+4} ${x-8} ${y+9}`,'#303030')+L(`${x+3} ${y-8}V${y+4}M${x+6} ${y-9}V${y+4}`,1.200);
    const dark='#60646f', mid='#7c8290', lite='#f2ffff', pan='#8e8e8e';
    const tex=(id,bf,o,seed,a,b)=>`<filter id="${id}" x="0" y="0" width="1" height="1" color-interpolation-filters="sRGB"><feTurbulence type="fractalNoise" baseFrequency="${bf}" numOctaves="${o}" seed="${seed}"/><feColorMatrix values="${`${a} 0 0 0 ${b} `.repeat(3)}0 0 0 0 1"/><feComposite in2="SourceGraphic" operator="in"/></filter>`;
    return `<svg viewBox="273 155 1640 833" preserveAspectRatio="xMidYMid meet" role="img" aria-label="Air handling unit assembly">
    <defs>
    ${tex('wall','.07 .06',4,7,.26,.21)}${tex('floor','.06 .1',4,3,.3,.49)}${tex('galv','.03 .06',3,5,.4,.47)}${tex('rail','.03 .06',3,5,.35,.17)}
    <linearGradient id="doorg" x2="1" y2="1"><stop stop-color="#666"/><stop offset="1" stop-color="#707070"/></linearGradient>
    <linearGradient id="topg" x1="0" y1="1" x2="1" y2="0"><stop stop-color="#cfcfcf"/><stop offset="1" stop-color="#dcdcdc"/></linearGradient>
    </defs>
    <g shape-rendering="crispEdges">
    <path d="M809 507 1016 627V880L809 762z" fill="#444" filter="url(#wall)"/>
    <path d="M819 761 1016 645V877z" fill="#999" filter="url(#floor)"/>
    ${P('819 757 1012 644 1012 651 819 763',lite)}${P('819 755 1012 642 1012 646 819 759',dark)}
    ${P('906 713 916 706 1017 766 1017 777',lite)}${L('911 709 1017 771M920 705 1017 761M904 716 1017 781',1)}
    ${P('809 507 1016 627V749L809 634','#6e6e6e')}
    ${P('813 528 815 522 819 521 1006 627 1012 635V735L1007 739 819 633 813 624','#5a5a5a','#111',1.3)}
    <path d="M824 527 1008 633V729L824 625z" fill="#444" filter="url(#wall)"/>
    ${P('967 609.500 980 617V666L967 673',mid)}${L('971 612V671M978 616V668',1)}
    <path d="M943 689 1008 652V729z" fill="#999" filter="url(#floor)"/>
    ${P('936 689 1008 647 1008 652 941 692',lite)}${P('934 688 1008 644 1008 647 936 689',dark)}
    <path d="M824 624 943 692 1008 729 1007 734 817 627z" fill="#999" filter="url(#galv)"/>
    ${L('824 526V624M817 522V627L824 624M824 624 1008 729V633M824 526 1008 633',1.300)}${L('817 627 1007 734M824 528 1008 637',1)}
    ${P('810 633 1016 748V759L810 644',dark)}
    ${P('809 645 815 648V757L809 760',mid)}${P('815 648 819 650V756L815 758','#6c6c6c')}
    ${P('809 764 816 759 1017 875V885L1014 884',lite)}${P('816 758 1017 873V877L816 762',dark)}
    ${P('809 772 1016 886V894L809 779',dark)}
    <path d="M812 779 1017 895V905L812 790z" fill="#555" filter="url(#rail)"/>
    <path d="M812 786 1024 908 1024 914 804 789 806 785z" fill="#aaa" filter="url(#galv)"/>
    ${L('804 786V790L1024 914',1)}${L('812 779V792M818 783V789L1017 904M1017 893V909')}
    ${P('801 494 809 499V762L801 758',dark)}
    <path d="M1017 895 1346 711V722L1024 910 1017 908z" fill="#555" filter="url(#rail)"/>
    <path d="M1024 908 1346 719 1352 722V726L1024 914z" fill="#bbb" filter="url(#galv)"/>
    ${L('1024 914 1352 727V723L1346 720',1)}${L('1024 908 1346 722V708',1)}
    ${P('1108 850 1139 832V838L1108 855','#fff')}${P('1225 782 1254 765V771L1225 787','#fff')}
    ${P('1031 894 1041 889Q1040 897 1031 898','#fff')}${P('1322 726 1332 720Q1332 729 1324 730','#fff')}
    ${P('1031 627 1346 445V704L1031 884',pan)}
    ${P('1031 884 1346 702V711L1031 892',mid)}
    ${P('809 489 1125 307 1140 307 1346 426 1344 436 1024 622 806 499',lite)}
    ${P('817 495 1133 313 1338 431 1024 613','#fff','#0a0a0a',1.700)}
    ${P('906 446 913 441 1118 559 1110 563',lite,'#0a0a0a',1.500)}${P('906 446 912 441 915 443 908 448','#333')}${P('1110 563 1118 559 1118 562 1112 566','#333')}
    ${P('812 500 1016 618V627L812 509',dark)}${P('1032 618 1346 437V446L1032 628',mid)}
    ${P('1118 579 1127 574V828L1118 833',mid)}${L('1126 574V829',2.500)}${L('1119 577V832',1.500)}${P('1118 579 1127 574 1127 577 1118 582','#222')}
    ${P('1234 512 1243 507V762L1234 767',mid)}${L('1235 510V767',2.500)}${L('1243 506V763',2.500)}${P('1232 766 1244 759V763L1232 770','#222')}
    ${P('1347 443H1356V700L1347 704',mid)}${L('1347 445V704',2)}
    ${P('1016 626 1024 632V890L1016 886',dark)}${P('1024 632 1032 628V886L1024 890',mid)}${L('1024 630V890M1032 628V886',1.800)}
    ${P('1133 303 1143 309 1133 315 1123 310','#3d3d3d')}
    ${P('801 494 809 489 818 494 812 500 812 508 801 504','#272727')}${P('801 494 809 489 818 494 811 499','#404040')}
    ${P('1346 425 1356 431V443L1345 446 1344 437 1337 431','#262626')}${P('1346 425 1356 431 1345 437 1337 431','#404040')}
    ${P('1014 618 1024 613 1034 618V628L1024 634 1014 629','#202020')}${P('1014 618 1024 613 1034 618 1024 623','#414141')}
    ${P('801 758 808 763 813 759 812 775 801 770','#202020')}${P('1014 884 1024 888 1034 883V893L1024 898 1014 893','#202020')}${P('1356 695V707L1345 712V702','#202020')}
    ${P('1150 578 1211 542 1232 556 1172 590','url(#topg)')}${P('1150 578 1172 590V694L1150 683','#555')}${P('1172 590 1232 556V662L1172 695','url(#doorg)')}
    ${L('1171 590V694',3)}${L('1176 591V691',1.300)}${L('1173 589 1232 556',2)}${L('1156 685 1164 689',1,'#2f9bd6')}
    ${P('1177 603 1182 601V611L1177 613','#151515')}${P('1177 669 1182 667V677L1177 679','#151515')}
    ${[[1246,537],[1246,634],[1246,731],[1129,590],[1129,811]].map(a=>hr(...a)).join('')}${[[1116,612],[1116,708],[1116,805]].map(a=>hl(...a)).join('')}
    ${P('1037 654 1041 651 1048 654V662L1046 677H1042L1043 663 1038 659','#242424')}
    ${P('1339 479 1343 477 1349 480 1350 494 1348 503 1345 502 1345 490 1340 486','#242424')}
    ${P('1037 848 1041 845 1042 850 1038 854','#242424')}${P('1338 674 1342 671 1344 676 1340 679','#242424')}
    ${[[1127,624],[1127,675],[1127,726],[1127,776],[1180,543],[1180,797],[1233,665],[1233,716]].map(([x,y])=>`<rect x="${x}" y="${y}" width="2" height="3" fill="#222"/>`).join('')}
    </g>
    <path d="M324 920V900" stroke="#00b400" stroke-width="4"/><path d="M319 901 324 889 329 901z" fill="#00b400"/>
    <path d="M326 919 345 908" stroke="#f7b1b1" stroke-width="4"/><path d="M341 905 351 905 345 912z" fill="#c32222"/>
    <path d="M325 921 342 930" stroke="#0000a0" stroke-width="4"/><path d="M342 925 350 935 338 934z" fill="#0000a0"/><circle cx="326" cy="919" r="2" fill="#b11"/>
    <text x="322" y="884" font-size="10" fill="#35e035">Y</text><text x="353" y="902" font-size="10" fill="#f07070">X</text><text x="353" y="938" font-size="10" fill="#1515e0">Z</text>
    </svg>`}
});

customElements.define('cad-viewport',class extends Base{
  css(){return `:host{display:grid;grid-template:minmax(0,1fr)/minmax(0,1fr);background:#fff}
  cad-model,.hud,.win,.task,.tab{grid-area:1/1;min-width:0;min-height:0}
  .hud{align-self:start;justify-self:center;display:flex;align-items:center;padding:2px 0 0 4px}
  .hud button{width:26px;height:26px}.hud .m{width:14px}
  .sel{display:flex;border:1px solid #8c8c8c;background:#fff}.sel button{height:24px}.hud .sel .p{background:#bdbdbd;border-right:1px solid #8c8c8c}.hud .sel .m{width:12px}
  .win{align-self:start;justify-self:end;display:flex;padding-top:2px}.win button{width:26px;height:26px}
  .win cad-icon{opacity:.55}.win .d cad-icon{opacity:1}
  .task{align-self:start;justify-self:end;margin-top:58px;width:26px;border:1px solid var(--line);border-right:0;overflow:hidden}
  .task button{height:30px;width:32px;background:var(--tab);border-bottom:1px solid var(--line)}.task button:first-child{background:var(--bar);height:29px}.task button:last-child{border:0}
  .tab{align-self:start;justify-self:start;margin:392px 0 0 -1px;width:12px;height:49px;border:1px solid var(--line);border-left:0;background:var(--bar);display:flex;align-items:center;justify-content:center}
  .tab i{width:6px;height:6px;border:1px solid #999;background:#ccc;border-radius:50%}`}
  html(){const b=(n,a)=>`<button aria-label="${n}">${icon(n)}</button>${a?`<button class="m" aria-label="${n} options">${arrow(1)}</button>`:''}`;
  return `<cad-model></cad-model>
  <div class="hud">${b('fit')}${b('zarea')}${b('prev')}${b('section')}${b('annview')}${b('orient',1)}${b('style',1)}
  <div class="sel"><button class="p" aria-label="Hide or show items">${icon('eye')}</button><button class="m" aria-label="Visibility options">${arrow()}</button></div>${b('appear')}${b('scene',1)}${b('monitor',1)}</div>
  <div class="win">${['dleft','dright'].map(n=>`<button class="d" aria-label="${n}">${icon(n)}</button>`).join('')}${['min','restore','close'].map(n=>`<button aria-label="${n} view">${icon(n)}</button>`).join('')}</div>
  <div class="task">${['home','books','lib','palette','orb','props'].map(n=>`<button aria-label="${n}">${icon(n)}</button>`).join('')}</div>
  <button class="tab" aria-label="Collapse panel"><i></i></button>`}
});

customElements.define('cad-sheet-tabs',class extends Base{
  css(){return `:host{display:flex;flex:none;height:21px;border-top:1px solid var(--line);border-bottom:1px solid var(--line);background:var(--bar);font-size:15px;line-height:19px}
  .n{display:flex;background:#a9a8bf;border-right:1px solid #555;padding-left:2px}.n button{width:20px;border:1px solid #8786a0;border-top-color:#222}
  .t{border-right:1px solid var(--line);background:var(--tab);padding:0 12px;color:#222}.t.on{background:var(--bar);font-weight:700;padding:0 12px 0 14px;color:#000}.t.w{padding:0 24px 0 14px}`}
  html(){const s=d=>`<button aria-label="Sheet navigation"><svg width="12" height="12" viewBox="0 0 12 12"><path d="${d}" fill="#77769a"/></svg></button>`;
  return `<div class="n">${s('M2 0h2v12H2zM11 0v12L4 6z')}${s('M9 0v12L2 6z')}${s('M3 0v12l7-6z')}${s('M8 0h2v12H8zM1 0v12l7-6z')}</div><button class="t on">Model</button><button class="t">3D Views</button><button class="t w">Motion Study 1</button>`}
});

customElements.define('cad-statusbar',class extends Base{
  css(){return `:host{display:flex;flex:none;height:18px;overflow:hidden;line-height:25px;background:var(--bar);padding-left:1px;white-space:nowrap}
  .st{display:flex;gap:11px;margin-left:auto}.u{display:flex;margin-left:123px;gap:23px}.u .a{border:3px solid transparent;border-bottom:4px solid #333;border-top:0;height:0;margin-top:11px}
  .end{width:38px;height:20px;overflow:hidden;padding:1px 0 0 26px}button{display:block;line-height:25px}`}
  html(){return `<slot></slot><div class="st"><slot name="state"></slot></div><div class="u"><button>Custom</button><i class="a"></i></div><div class="end">${icon('tags',18)}</div>`}
});
</script>
</body>
</html>
